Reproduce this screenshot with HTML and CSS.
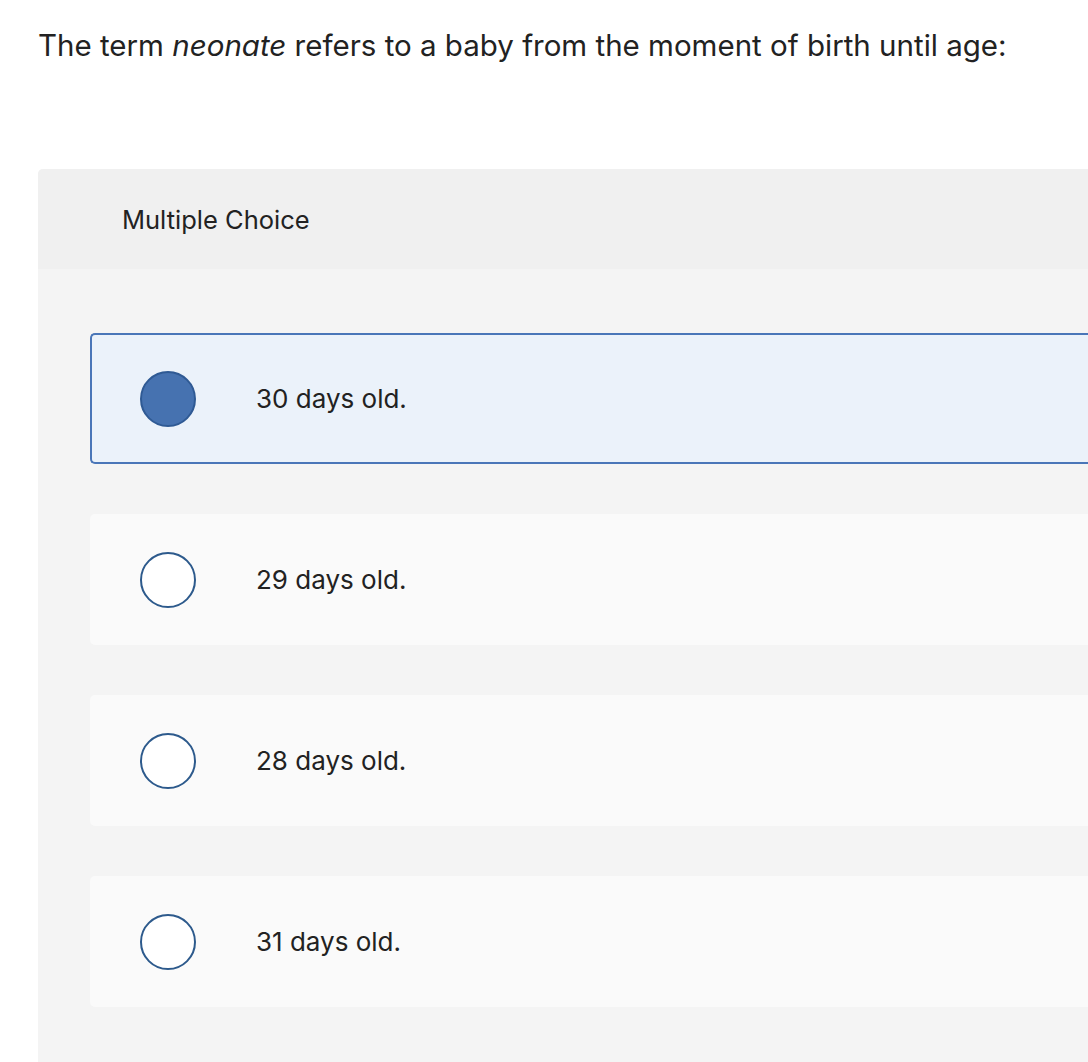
FILE: index.html
```html
<!DOCTYPE html>
<html lang="en">
<head>
    <meta charset="UTF-8">
    <meta name="viewport" content="width=device-width, initial-scale=1.0">
    <title>Multiple Choice Question</title>
    <link rel="stylesheet" href="styles.css">
</head>
<body>
    <div class="question">
        <p class="question-text">The term <em>neonate</em> refers to a baby from the moment of birth until age:</p>
    </div>

    <div class="choice-card">
        <div class="choice-header">Multiple Choice</div>
        <div class="choice-list">
            <label class="choice-item selected">
                <span class="radio"></span>
                <span class="choice-text">30 days old.</span>
            </label>
            <label class="choice-item">
                <span class="radio"></span>
                <span class="choice-text">29 days old.</span>
            </label>
            <label class="choice-item">
                <span class="radio"></span>
                <span class="choice-text">28 days old.</span>
            </label>
            <label class="choice-item">
                <span class="radio"></span>
                <span class="choice-text">31 days old.</span>
            </label>
        </div>
    </div>
</body>
</html>
```

FILE: styles.css
```css
html {
    overflow: hidden;
}

body {
    margin: 0;
    padding: 0 0 0 38px;
    font-family: Inter, "Open Sans", sans-serif;
    color: #222;
    background-color: #fff;
    width: 1200px;
}

.question {
    height: 169px;
}

.question-text {
    margin: 0;
    padding-top: 25px;
    font-size: 29.5px;
    line-height: 40px;
    color: #222;
}

.question-text em {
    font-style: italic;
}

.choice-card {
    background: #f4f4f4;
    border-radius: 5px 0 0 0;
    height: 900px;
    overflow: hidden;
}

.choice-header {
    background: #f0f0f0;
    height: 100px;
    padding-left: 84px;
    display: flex;
    align-items: center;
    font-size: 25.5px;
}

.choice-list {
    display: flex;
    flex-direction: column;
    gap: 50px;
    padding: 64px 0 0 52px;
}

.choice-item {
    display: flex;
    align-items: center;
    height: 131px;
    box-sizing: border-box;
    background: #fafafa;
    border-radius: 5px 0 0 5px;
    padding-left: 50px;
    cursor: pointer;
}

.choice-item.selected {
    background: #ebf2fa;
    border: 2px solid #4a76b8;
    border-right: none;
    padding-left: 48px;
}

.radio {
    width: 56px;
    height: 56px;
    box-sizing: border-box;
    border-radius: 50%;
    border: 2px solid #2d5a8c;
    background: #fff;
    flex-shrink: 0;
}

.selected .radio {
    background: #4672b0;
    border-color: #2f5a94;
}

.choice-text {
    margin-left: 60px;
    font-size: 26px;
    color: #222;
}
```
